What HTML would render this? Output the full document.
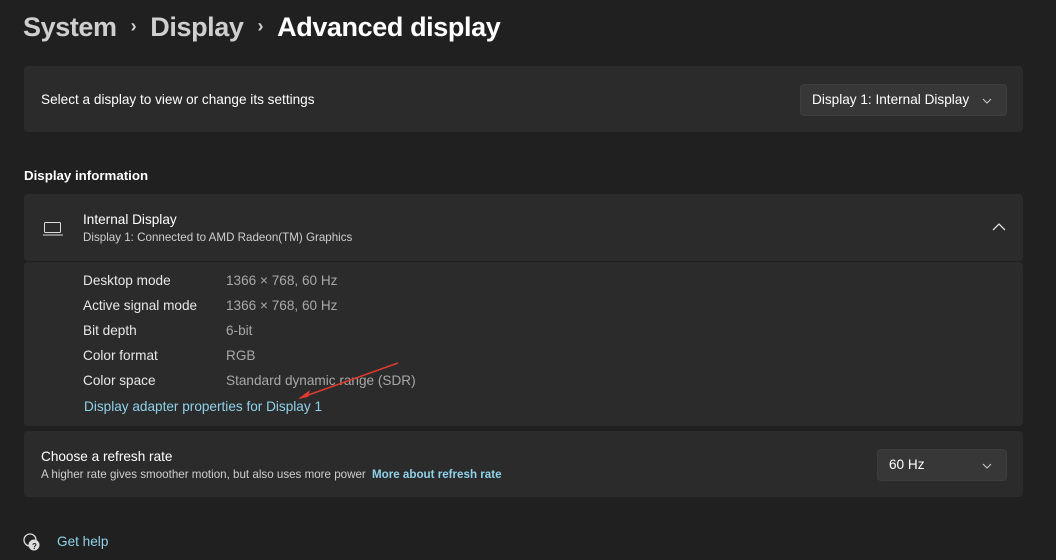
<!DOCTYPE html>
<html><head><style>
body{margin:0;width:1056px;height:560px;background:#202020;font-family:"Liberation Sans",sans-serif;color:#fff;position:relative;overflow:hidden}
.a{position:absolute;white-space:nowrap}
.card{position:absolute;left:24px;width:999px;background:#2b2b2b;border-radius:4px}
.t{font-size:13.6px;color:#fff}
.s{font-size:11.6px;color:#cfcfcf}
.dd{position:absolute;background:#373737;border-radius:4px;border:1px solid #3d3d3d;box-sizing:border-box;font-size:13.6px;color:#fff}
.lbl{position:absolute;left:83px;font-size:13.6px;color:#e8e8e8}
.val{position:absolute;left:226px;font-size:13.6px;color:#a8a8a8}
</style></head><body>
<div class="a" style="left:23px;top:12px;font-size:27px;font-weight:bold;letter-spacing:-0.4px"><span style="color:#cfcfcf">System</span><span style="color:#cfcfcf;font-size:18px;margin:0 14px;position:relative;top:-4px">›</span><span style="color:#cfcfcf">Display</span><span style="color:#cfcfcf;font-size:18px;margin:0 14px;position:relative;top:-4px">›</span><span style="color:#fff">Advanced display</span></div>

<div class="card" style="top:66px;height:66px"></div>
<div class="a t" style="left:41px;top:92px">Select a display to view or change its settings</div>
<div class="dd" style="left:800px;top:84px;width:207px;height:32px"><span class="a" style="left:11px;top:7px">Display 1: Internal Display</span>
<svg class="a" style="left:181px;top:12px" width="10" height="8"><path d="M1 2l4 4 4-4" stroke="#ccc" fill="none"/></svg></div>

<div class="a" style="left:24px;top:168px;font-size:13.3px;font-weight:bold">Display information</div>
<div class="card" style="top:194px;height:67px"></div>
<div class="card" style="top:262px;height:164px"></div>
<svg class="a" style="left:42px;top:221px" width="22" height="16"><rect x="2.5" y="1.5" width="16" height="10" rx="1" stroke="#ddd" fill="none"/><path d="M1 14h20" stroke="#ddd"/></svg>
<div class="a t" style="left:83px;top:212px">Internal Display</div>
<div class="a s" style="left:83px;top:231px">Display 1: Connected to AMD Radeon(TM) Graphics</div>
<svg class="a" style="left:992px;top:222px" width="14" height="10"><path d="M1 8l6-6 6 6" stroke="#ddd" stroke-width="1.3" fill="none"/></svg>

<div class="lbl" style="top:273px">Desktop mode</div><div class="val" style="top:273px">1366 × 768, 60 Hz</div>
<div class="lbl" style="top:298px">Active signal mode</div><div class="val" style="top:298px">1366 × 768, 60 Hz</div>
<div class="lbl" style="top:323px">Bit depth</div><div class="val" style="top:323px">6-bit</div>
<div class="lbl" style="top:348px">Color format</div><div class="val" style="top:348px">RGB</div>
<div class="lbl" style="top:373px">Color space</div><div class="val" style="top:373px">Standard dynamic range (SDR)</div>
<div class="a" style="left:84px;top:399px;font-size:13.6px;color:#8fd2ea">Display adapter properties for Display 1</div>
<svg class="a" style="left:270px;top:360px" width="135" height="45"><path d="M128 3L30 38" stroke="#e03a2f" stroke-width="1.5"/><path d="M28 39l12-9-2 7z" fill="#e03a2f"/></svg>

<div class="card" style="top:431px;height:66px"></div>
<div class="a t" style="left:41px;top:449px">Choose a refresh rate</div>
<div class="a s" style="left:41px;top:468px">A higher rate gives smoother motion, but also uses more power <b style="color:#8fd2ea;margin-left:3px">More about refresh rate</b></div>
<div class="dd" style="left:877px;top:449px;width:130px;height:32px"><span class="a" style="left:11px;top:7px">60 Hz</span>
<svg class="a" style="left:104px;top:12px" width="10" height="8"><path d="M1 2l4 4 4-4" stroke="#ccc" fill="none"/></svg></div>

<svg class="a" style="left:22px;top:532px" width="20" height="20"><circle cx="8" cy="8" r="6" stroke="#ddd" fill="none" stroke-width="1.3"/><circle cx="12" cy="13" r="5.5" fill="#ddd"/><text x="10" y="17" font-size="8" fill="#202020" font-family="Liberation Sans" font-weight="bold">?</text></svg>
<div class="a" style="left:57px;top:534px;font-size:13.6px;color:#8fd2ea">Get help</div>
</body></html>
